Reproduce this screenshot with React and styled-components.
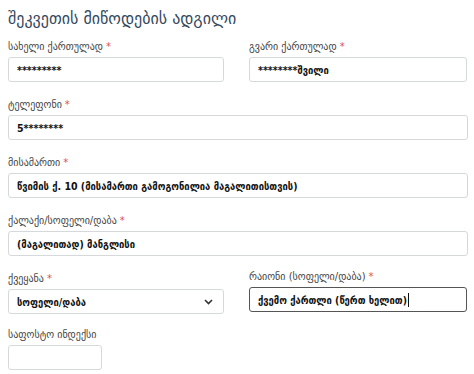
import React from 'react';
import styled, { createGlobalStyle } from 'styled-components';

const GlobalStyle = createGlobalStyle`
  html, body {
    margin: 0;
    padding: 0;
    background: #fff;
  }

  body {
    font-family: 'DejaVu Sans', 'Noto Sans', sans-serif;
    color: #333;
  }

  *, *::after, *::before {
    box-sizing: border-box;
  }
`;

const Page = styled.div`
  width: 474px;
  padding: 8px 6px 0 8px;
`;

const Title = styled.h3`
  margin: 0 0 10px;
  font-size: 16px;
  font-weight: 400;
  color: #34495e;
  line-height: 22px;
`;

const Row = styled.div`
  display: grid;
  grid-template-columns: ${p => (p.split ? '216px 218px' : '1fr')};
  column-gap: 25px;
  margin-bottom: ${p => p.gap || 16}px;
`;

const Field = styled.div`
  display: flex;
  flex-direction: column;
  margin-top: ${p => p.lift ? -2 : 0}px;
`;

const Label = styled.label`
  font-size: 10px;
  line-height: 13px;
  color: #444;
  margin-bottom: 4px;
`;

const Star = styled.span`
  color: #d9534f;
  margin-left: 3px;
`;

const Input = styled.div`
  height: 25px;
  width: ${p => p.width || '100%'};
  display: flex;
  align-items: center;
  padding: 0 8px;
  border: 1px solid ${p => (p.focused ? '#555' : '#d6d9dc')};
  border-radius: 3px;
  background: #fff;
  font-family: 'DejaVu Sans Condensed', 'DejaVu Sans', sans-serif;
  font-size: 10.5px;
  font-weight: 600;
  color: #111;
  white-space: nowrap;
  overflow: hidden;
`;

const SelectBox = styled(Input)`
  justify-content: space-between;
  padding-right: 10px;
`;

const Caret = styled.span`
  display: inline-block;
  width: 1px;
  height: 14px;
  background: #111;
  margin-left: 1px;
`;

const Chevron = () => (
  <svg width="9" height="6" viewBox="0 0 9 6">
    <path d="M1 1 L4.5 4.5 L8 1" fill="none" stroke="#333" strokeWidth="1.6" />
  </svg>
);

const Req = ({ children }) => (
  <Label>
    {children}
    <Star>*</Star>
  </Label>
);

const App = () => (
  <>
    <GlobalStyle />
    <Page>
      <Title>შეკვეთის მიწოდების ადგილი</Title>

      <Row split>
        <Field>
          <Req>სახელი ქართულად</Req>
          <Input>*********</Input>
        </Field>
        <Field>
          <Req>გვარი ქართულად</Req>
          <Input>********შვილი</Input>
        </Field>
      </Row>

      <Row>
        <Field>
          <Req>ტელეფონი</Req>
          <Input>5********</Input>
        </Field>
      </Row>

      <Row>
        <Field>
          <Req>მისამართი</Req>
          <Input>წვიმის ქ. 10 (მისამართი გამოგონილია მაგალითისთვის)</Input>
        </Field>
      </Row>

      <Row>
        <Field>
          <Req>ქალაქი/სოფელი/დაბა</Req>
          <Input>(მაგალითად) მანგლისი</Input>
        </Field>
      </Row>

      <Row split gap={14}>
        <Field>
          <Req>ქვეყანა</Req>
          <SelectBox>
            სოფელი/დაბა
            <Chevron />
          </SelectBox>
        </Field>
        <Field lift>
          <Req>რაიონი (სოფელი/დაბა)</Req>
          <Input focused>
            ქვემო ქართლი (წერთ ხელით)
            <Caret />
          </Input>
        </Field>
      </Row>

      <Row>
        <Field>
          <Label>საფოსტო ინდექსი</Label>
          <Input width="94px" />
        </Field>
      </Row>
    </Page>
  </>
);

export default App;
